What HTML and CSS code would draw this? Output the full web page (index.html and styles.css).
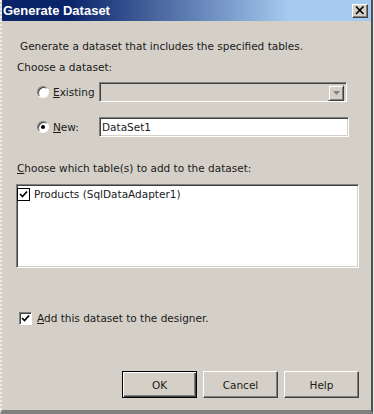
FILE: index.html
```html
<!DOCTYPE html>
<html>
<head>
<meta charset="utf-8">
<link rel="stylesheet" href="styles.css">
</head>
<body>
<div class="window">
  <div class="titlebar">
    <span class="title">Generate Dataset</span>
    <span class="close"><svg width="10" height="9" viewBox="0 0 10 9"><path d="M1 0.5 L8.5 8 M8.5 0.5 L1 8" stroke="#000" stroke-width="1.6" fill="none"/></svg></span>
  </div>
  <div class="content">
    <div class="intro">Generate a dataset that includes the specified tables.</div>
    <div class="label l2">Choose a dataset:</div>
    <div class="row r-existing">
      <span class="radio"></span>
      <span class="rlabel"><u>E</u>xisting</span>
      <div class="combo"><span class="dd"><svg width="7" height="4" viewBox="0 0 7 4"><path d="M0 0 H7 L3.5 4 Z" fill="#808080"/></svg></span></div>
    </div>
    <div class="row r-new">
      <span class="radio checked"><span class="dot"></span></span>
      <span class="rlabel"><u>N</u>ew:</span>
      <div class="textbox">DataSet1</div>
    </div>
    <div class="label l3"><u>C</u>hoose which table(s) to add to the dataset:</div>
    <div class="listbox">
      <div class="item"><span class="check"><svg width="9" height="9" viewBox="0 0 9 9"><path d="M1 4 L3.5 6.5 L8 1.5" stroke="#000" stroke-width="1.7" fill="none"/></svg></span>Products (SqlDataAdapter1)</div>
    </div>
    <div class="addrow"><span class="check box3d"><svg width="9" height="9" viewBox="0 0 9 9"><path d="M1 4 L3.5 6.5 L8 1.5" stroke="#000" stroke-width="1.7" fill="none"/></svg></span><span><u>A</u>dd this dataset to the designer.</span></div>
    <div class="buttons">
      <div class="btn default"><span>OK</span></div>
      <div class="btn"><span>Cancel</span></div>
      <div class="btn"><span>Help</span></div>
    </div>
  </div>
</div>
</body>
</html>
```
FILE: styles.css
```css
html, body { margin: 0; padding: 0; background: #e6e6e6; }
.window {
  width: 369px;
  height: 410px;
  background: #d4d0c8;
  border-left: 2px dotted #eeeeee;
  border-right: 2px solid #505050;
  border-bottom: 4px solid #808080;
  font-family: "DejaVu Sans", sans-serif;
  font-size: 10.5px;
  color: #1a1a1a;
  display: flex;
  flex-direction: column;
}
.titlebar {
  height: 21px;
  background: linear-gradient(to right, #0a246a 0%, #0a246a 18%, #a6caf0 78%, #a6caf0 100%);
  display: flex;
  align-items: center;
  justify-content: space-between;
  padding: 0 3px 0 1px;
}
.title { color: #fff; font-weight: bold; font-size: 13px; font-family: "Liberation Sans", Arial, sans-serif; }
.close {
  width: 16px; height: 14px; box-sizing: border-box;
  background: #d4d0c8;
  border-top: 1px solid #fff; border-left: 1px solid #fff;
  border-right: 1px solid #404040; border-bottom: 1px solid #404040;
  box-shadow: inset -1px -1px 0 #808080;
  display: flex; align-items: center; justify-content: center;
}
.content { padding: 0 0 0 14px; display: flex; flex-direction: column; flex: 1; }
.intro { margin-top: 18px; padding-left: 4px; height: 14px; line-height: 14px; }
.label { height: 14px; line-height: 14px; padding-left: 1px; }
.l2 { margin-top: 7px; }
.row { display: flex; align-items: center; }
.r-existing { margin-top: 8px; height: 20px; }
.r-new { margin-top: 15px; height: 20px; }
.radio {
  width: 12px; height: 12px; box-sizing: border-box; border-radius: 50%;
  margin-left: 21px;
  background: #fff;
  border: 1px solid; border-color: #808080 #fff #fff #808080;
  box-shadow: inset 1px 1px 0 #404040;
  display: flex; align-items: center; justify-content: center;
}
.dot { width: 4px; height: 4px; border-radius: 50%; background: #000; }
.rlabel { margin-left: 4px; width: 46px; }
.combo {
  width: 248px; height: 20px; box-sizing: border-box;
  background: #d4d0c8;
  border: 1px solid; border-color: #808080 #fff #fff #808080;
  box-shadow: inset 1px 1px 0 #404040, inset -1px -1px 0 #d4d0c8;
  display: flex; justify-content: flex-end; padding: 2px;
}
.dd {
  width: 16px; height: 16px; box-sizing: border-box;
  background: #d4d0c8;
  border: 1px solid; border-color: #d4d0c8 #404040 #404040 #d4d0c8;
  box-shadow: inset 1px 1px 0 #fff, inset -1px -1px 0 #808080;
  display: flex; align-items: center; justify-content: center;
}
.textbox {
  width: 250px; height: 20px; box-sizing: border-box;
  background: #fff;
  border: 1px solid; border-color: #808080 #fff #fff #808080;
  box-shadow: inset 1px 1px 0 #404040, inset -1px -1px 0 #d4d0c8;
  padding: 2px 0 0 2px; line-height: 14px;
}
.l3 { margin-top: 24px; }
.listbox {
  margin-top: 9px;
  width: 343px; height: 84px; box-sizing: border-box;
  background: #fff;
  border: 1px solid; border-color: #808080 #fff #fff #808080;
  box-shadow: inset 1px 1px 0 #404040, inset -1px -1px 0 #d4d0c8;
  padding: 3px 0 0 0;
}
.item { display: flex; align-items: center; height: 13px; line-height: 13px; }
.check {
  width: 13px; height: 13px; box-sizing: border-box;
  border: 1px solid #000; background: #fff;
  display: flex; align-items: center; justify-content: center;
  margin-right: 4px;
}
.box3d {
  border: 1px solid; border-color: #808080 #fff #fff #808080;
  box-shadow: inset 1px 1px 0 #404040;
  margin-left: 3px; margin-right: 5px;
}
.addrow { margin-top: 44px; display: flex; align-items: center; height: 13px; line-height: 13px; }
.buttons { margin-top: 46px; display: flex; gap: 6px; padding-left: 106px; }
.btn {
  width: 75px; height: 27px; box-sizing: border-box;
  background: #d4d0c8;
  border: 1px solid; border-color: #fff #404040 #404040 #fff;
  box-shadow: inset -1px -1px 0 #808080;
  display: flex; align-items: center; justify-content: center;
}
.btn.default { border: 1px solid #000; box-shadow: inset 1px 1px 0 #fff, inset -1px -1px 0 #404040, inset -2px -2px 0 #808080; }
```
